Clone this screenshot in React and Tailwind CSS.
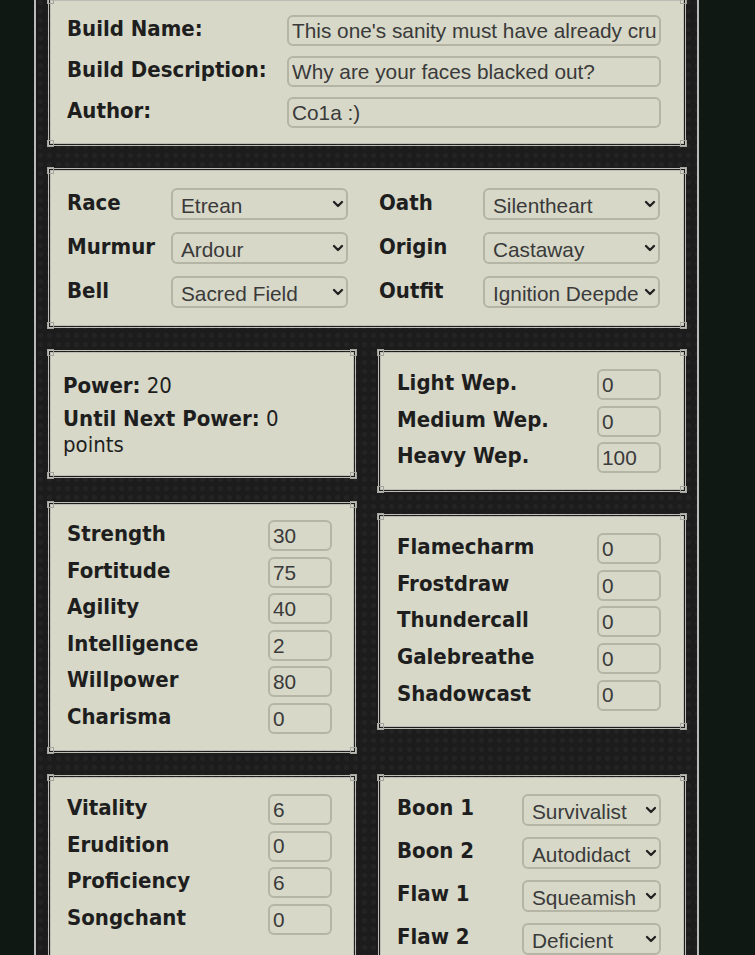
import React from "react";
import { ChevronDown } from "lucide-react";

const LABEL =
  "font-[family-name:'DejaVu_Sans_Condensed','DejaVu_Sans',sans-serif] font-bold text-[22px] leading-[26px] text-[#1e1e1e] -mt-[3px]";
const FIELD =
  "rounded-[6px] border-2 border-[#b4b5a4] bg-[#d7d8c8] font-[family-name:'Liberation_Sans',Arial,sans-serif] text-[20.8px] text-[#3a3a3a] outline-none";

function Panel({ className = "", children }) {
  return (
    <div className={`relative bg-[#d7d8c8] bg-clip-padding border-[3px] border-double border-[#bdbdb6] ${className}`}>
      {/* corner ornaments */}
      <span className="absolute -top-[4px] -left-[4px] w-[7px] h-[7px] border border-[#a5a5a0]" />
      <span className="absolute -top-[4px] -right-[4px] w-[7px] h-[7px] border border-[#a5a5a0]" />
      <span className="absolute -bottom-[4px] -left-[4px] w-[7px] h-[7px] border border-[#a5a5a0]" />
      <span className="absolute -bottom-[4px] -right-[4px] w-[7px] h-[7px] border border-[#a5a5a0]" />
      {children}
    </div>
  );
}

function NumRows({ rows, cols }) {
  return (
    <div className={`grid ${cols} gap-y-[5.6px] items-center`}>
      {rows.map(([label, value]) => (
        <React.Fragment key={label}>
          <span className={LABEL}>{label}</span>
          <input defaultValue={value} className={`${FIELD} h-[31px] w-[64px] px-[3px]`} />
        </React.Fragment>
      ))}
    </div>
  );
}

function Pick({ value, width }) {
  return (
    <div className={`relative ${width}`}>
      <select
        defaultValue={value}
        className={`${FIELD} w-full h-[32px] appearance-none pl-[8px] pr-[20px] overflow-hidden whitespace-nowrap`}
      >
        <option>{value}</option>
      </select>
      <ChevronDown
        size={16}
        strokeWidth={3.5}
        className="pointer-events-none absolute right-[2px] top-1/2 -translate-y-1/2 text-[#222]"
      />
    </div>
  );
}

export default function App() {
  return (
    <div className="min-h-screen bg-[#0f1813]">
      <div className="ml-[34px] w-[665px] min-h-screen border-x-2 border-[#b9b9b9] bg-[#1c1c1c] bg-[radial-gradient(circle,#232323_2px,transparent_3px)] bg-[length:9px_9px] pl-[12px] pr-[11px] pb-10">
        <div className="-mt-[2px] flex flex-col gap-[22px]">
          {/* Build info */}
          <Panel className="pl-[16px] pr-[22px] pt-[14px] pb-[15px]">
            <div className="grid grid-cols-[220px_374px] gap-y-[10px] items-center">
              {[
                ["Build Name:", "This one's sanity must have already crumbled"],
                ["Build Description:", "Why are your faces blacked out?"],
                ["Author:", "Co1a :)"],
              ].map(([label, value]) => (
                <React.Fragment key={label}>
                  <span className={LABEL}>{label}</span>
                  <input defaultValue={value} className={`${FIELD} h-[31px] w-[374px] px-[3px]`} />
                </React.Fragment>
              ))}
            </div>
          </Panel>

          {/* Race / origin */}
          <Panel className="pl-[16px] pr-[23px] pt-[17px] pb-[17px]">
            <div className="flex gap-[31px]">
              {[
                [["Race", "Etrean"], ["Murmur", "Ardour"], ["Bell", "Sacred Field"]],
                [["Oath", "Silentheart"], ["Origin", "Castaway"], ["Outfit", "Ignition Deepdelver"]],
              ].map((col, i) => (
                <div key={i} className="grid grid-cols-[104px_177px] gap-y-[12px] items-center">
                  {col.map(([label, value]) => (
                    <React.Fragment key={label}>
                      <span className={LABEL}>{label}</span>
                      <Pick value={value} width="w-[177px]" />
                    </React.Fragment>
                  ))}
                </div>
              ))}
            </div>
          </Panel>

          <div className="grid grid-cols-2 gap-[22px] items-start">
            <div className="flex flex-col gap-[24px]">
              <Panel className="pl-[12px] pr-[22px] pt-[20px] pb-[17px]">
                <div className="flex flex-col gap-[7px] font-[family-name:'DejaVu_Sans_Condensed','DejaVu_Sans',sans-serif] text-[22px] leading-[26px] text-[#1e1e1e]">
                  <p>
                    <b>Power:</b> 20
                  </p>
                  <p>
                    <b>Until Next Power:</b> 0 points
                  </p>
                </div>
              </Panel>
              <Panel className="pl-[16px] pr-[24px] pt-[15px] pb-[16px]">
                <NumRows
                  cols="grid-cols-[201px_64px]"
                  rows={[["Strength", "30"], ["Fortitude", "75"], ["Agility", "40"], ["Intelligence", "2"], ["Willpower", "80"], ["Charisma", "0"]]}
                />
              </Panel>
            </div>
            <div className="flex flex-col gap-[22px]">
              <Panel className="pl-[16px] pr-[22px] pt-[16px] pb-[16px]">
                <NumRows
                  cols="grid-cols-[200px_64px]"
                  rows={[["Light Wep.", "0"], ["Medium Wep.", "0"], ["Heavy Wep.", "100"]]}
                />
              </Panel>
              <Panel className="pl-[16px] pr-[22px] pt-[16px] pb-[15px]">
                <NumRows
                  cols="grid-cols-[200px_64px]"
                  rows={[["Flamecharm", "0"], ["Frostdraw", "0"], ["Thundercall", "0"], ["Galebreathe", "0"], ["Shadowcast", "0"]]}
                />
              </Panel>
            </div>
          </div>

          <div className="grid grid-cols-2 gap-[22px]">
            <Panel className="pl-[16px] pr-[24px] pt-[16px] pb-[16px]">
              <NumRows
                cols="grid-cols-[201px_64px]"
                rows={[["Vitality", "6"], ["Erudition", "0"], ["Proficiency", "6"], ["Songchant", "0"]]}
              />
            </Panel>
            <Panel className="pl-[16px] pr-[22px] pt-[16px] pb-[16px]">
              <div className="grid grid-cols-[125px_139px] gap-y-[11px] items-center">
                {[["Boon 1", "Survivalist"], ["Boon 2", "Autodidact"], ["Flaw 1", "Squeamish"], ["Flaw 2", "Deficient"]].map(([label, value]) => (
                  <React.Fragment key={label}>
                    <span className={LABEL}>{label}</span>
                    <Pick value={value} width="w-[139px]" />
                  </React.Fragment>
                ))}
              </div>
            </Panel>
          </div>
        </div>
      </div>
    </div>
  );
}
